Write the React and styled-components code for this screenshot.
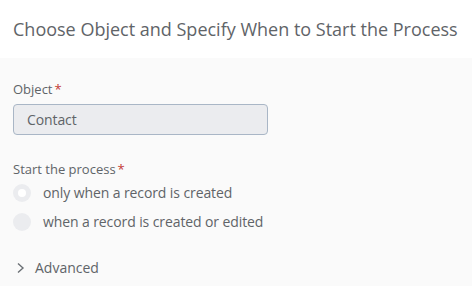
import styled, { createGlobalStyle } from "styled-components";

const GlobalStyle = createGlobalStyle`
  html, body {
    margin: 0;
    padding: 0;
    background: #fafafa;
  }
  body {
    font-family: "Open Sans", "Liberation Sans", sans-serif;
    color: #54595e;
  }
`;

const Page = styled.div`
  width: 472px;
  height: 286px;
  overflow: hidden;
  background: #fafafa;
`;

const Header = styled.div`
  height: 58px;
  display: flex;
  align-items: center;
  padding: 0 13px;
  background: #ffffff;
`;

const Title = styled.h2`
  margin: 0;
  padding-bottom: 1px;
  font-size: 18px;
  font-weight: 400;
  color: #5f6468;
  white-space: nowrap;
`;

const Body = styled.div`
  display: flex;
  flex-direction: column;
  padding: 22px 13px 0;
`;

const Field = styled.div`
  display: flex;
  flex-direction: column;
  margin-bottom: ${(p) => p.$gap || 0}px;
`;

const Label = styled.div`
  font-size: 13px;
  line-height: 18px;
  color: #5f6468;
  margin-bottom: ${(p) => p.$gap || 0}px;
`;

const Required = styled.span`
  color: #c23934;
  margin-left: 2px;
`;

const Input = styled.div`
  width: 255px;
  height: 31px;
  box-sizing: border-box;
  display: flex;
  align-items: center;
  padding: 0 13px;
  background: #ebecef;
  border: 1px solid #a9b6c6;
  border-radius: 4px;
  font-size: 14px;
  letter-spacing: -0.1px;
  color: #5f6468;
`;

const RadioRow = styled.label`
  display: flex;
  align-items: center;
  height: 29px;
  font-size: 14px;
  letter-spacing: -0.1px;
  color: #5f6468;
`;

const Dot = styled.span`
  width: 18px;
  height: 18px;
  border-radius: 50%;
  background: #ebecef;
  display: flex;
  align-items: center;
  justify-content: center;
  margin-right: 12px;
  &::after {
    content: "";
    display: ${(p) => (p.$checked ? "block" : "none")};
    width: 8px;
    height: 8px;
    border-radius: 50%;
    background: #ffffff;
  }
`;

const Advanced = styled.div`
  display: flex;
  align-items: center;
  gap: 10px;
  margin-top: 22px;
  padding-left: 3px;
  font-size: 14px;
  color: #5f6468;
`;

export default function App() {
  return (
    <Page>
      <GlobalStyle />
      <Header>
        <Title>Choose Object and Specify When to Start the Process</Title>
      </Header>
      <Body>
        <Field $gap={25}>
          <Label $gap={6}>
            Object<Required>*</Required>
          </Label>
          <Input>Contact</Input>
        </Field>
        <Field>
          <Label>
            Start the process<Required>*</Required>
          </Label>
          <RadioRow>
            <Dot $checked />
            only when a record is created
          </RadioRow>
          <RadioRow>
            <Dot />
            when a record is created or edited
          </RadioRow>
        </Field>
        <Advanced>
          <svg width="9" height="12" viewBox="0 0 9 12">
            <path d="M2 1.5 L7 6 L2 10.5" fill="none" stroke="#6b7075" strokeWidth="1.4" />
          </svg>
          Advanced
        </Advanced>
      </Body>
    </Page>
  );
}
